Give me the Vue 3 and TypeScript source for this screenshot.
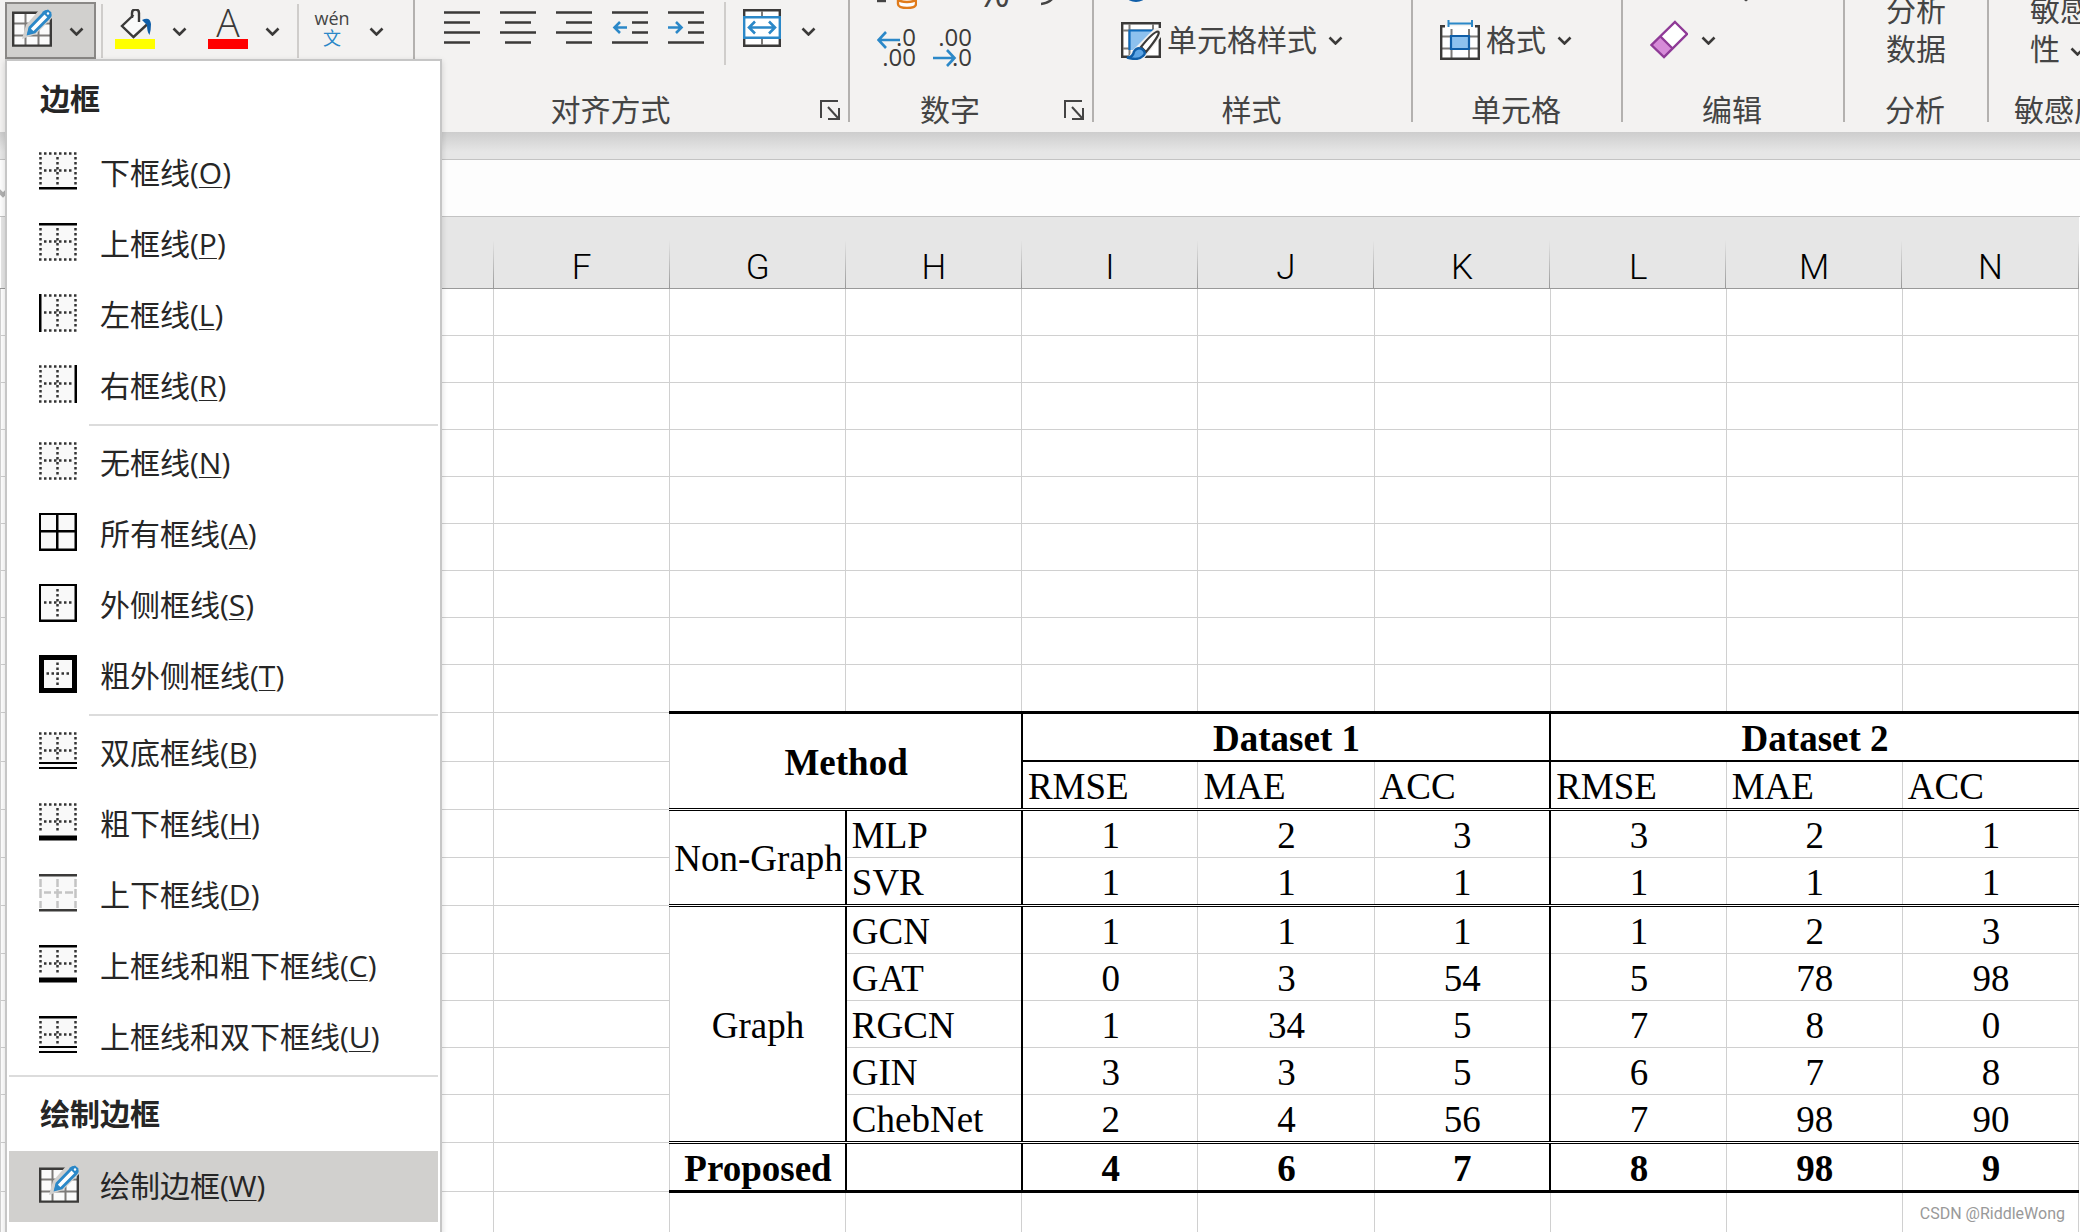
<script setup lang="ts">
interface MenuItem { label: string; key: string; icon: string }
interface Cell { text: string; cls: string; rows?: number; cols?: number }
interface Row { height: number; lead: number; cells: Cell[] }

const menuGroups: MenuItem[][] = [
  [
    { label: '下框线', key: 'O', icon: 'bottom' },
    { label: '上框线', key: 'P', icon: 'top' },
    { label: '左框线', key: 'L', icon: 'left' },
    { label: '右框线', key: 'R', icon: 'right' },
  ],
  [
    { label: '无框线', key: 'N', icon: 'none' },
    { label: '所有框线', key: 'A', icon: 'all' },
    { label: '外侧框线', key: 'S', icon: 'outer' },
    { label: '粗外侧框线', key: 'T', icon: 'thick-outer' },
  ],
  [
    { label: '双底框线', key: 'B', icon: 'double-bottom' },
    { label: '粗下框线', key: 'H', icon: 'thick-bottom' },
    { label: '上下框线', key: 'D', icon: 'top-bottom' },
    { label: '上框线和粗下框线', key: 'C', icon: 'top-thick-bottom' },
    { label: '上框线和双下框线', key: 'U', icon: 'top-double-bottom' },
  ],
]

// Dotted guides and solid strokes that make up each border icon
const dotted: Record<string, string> = {
  bottom: 'M0 1.5H38M1.5 5V34M36.5 5V34M5 18.5H34M18.5 5V34',
  top: 'M0 36.5H38M1.5 5V34M36.5 5V34M5 18.5H34M18.5 5V34',
  left: 'M5 1.5H38M5 36.5H38M36.5 5V34M5 18.5H34M18.5 5V34',
  right: 'M0 1.5H34M0 36.5H34M1.5 5V34M5 18.5H34M18.5 5V34',
  none: 'M0 1.5H38M0 36.5H38M1.5 5V34M36.5 5V34M5 18.5H34M18.5 5V34',
  all: '',
  outer: 'M5 18.5H34M18.5 5V34',
  'thick-outer': 'M7.5 18.5H32M18.5 7.5V32',
  'double-bottom': 'M0 1.5H38M1.5 5V28M36.5 5V28M5 18.5H34M18.5 5V28',
  'thick-bottom': 'M0 1.5H38M1.5 5V28M36.5 5V28M5 18.5H34M18.5 5V28',
  'top-bottom': '',
  'top-thick-bottom': 'M1.5 5V28M36.5 5V28M5 18.5H34M18.5 5V28',
  'top-double-bottom': 'M1.5 5V28M36.5 5V28M5 18.5H34M18.5 5V28',
}
const solid: Record<string, string> = {
  bottom: 'M0 35h38v2.5H0z',
  top: 'M0 0h38v2.5H0z',
  left: 'M0 0h2.5v38H0z',
  right: 'M35.5 0h2.5v38h-2.5z',
  none: '',
  all: 'M0 0h38v38H0zM2 2v15h15V2zM19.5 2v15h16V2zM2 19.5v16h15v-16zM19.5 19.5v16h16v-16z',
  outer: 'M0 0h38v38H0zM2 2v33.5h33.5V2z',
  'thick-outer': 'M0 0h38v38H0zM5 5v28h28V5z',
  'double-bottom': 'M0 30h38v2H0zM0 35h38v2H0z',
  'thick-bottom': 'M0 32.5h38v5H0z',
  'top-bottom': 'M0 0h38v2.5H0zM0 35h38v2.5H0z',
  'top-thick-bottom': 'M0 0h38v2.5H0zM0 32.5h38v5H0z',
  'top-double-bottom': 'M0 0h38v2.5H0zM0 30h38v2H0zM0 35h38v2H0z',
}

const columns = ['', '', '', 'F', 'G', 'H', 'I', 'J', 'K', 'L', 'M', 'N']

const blank = (n: number): Cell[] => Array.from({ length: n }, () => ({ text: '', cls: '' }))
const numbers = (values: number[], extra = ''): Cell[] =>
  values.map((v, i) => ({ text: String(v), cls: `num ${extra}${i % 3 === 0 ? ' vline' : ''}` }))
const method = (height: number, name: string, values: number[], group?: Cell, extra = ''): Row => ({
  height,
  lead: 4,
  cells: [...(group ? [group] : []), { text: name, cls: `name vline ${extra}` }, ...numbers(values, extra)],
})

const rows: Row[] = [
  ...Array.from({ length: 8 }, () => ({ height: 47, lead: 4, cells: blank(8) })),
  { height: 48, lead: 4, cells: blank(8) },
  {
    height: 49,
    lead: 4,
    cells: [
      { text: 'Method', cls: 'num strong heavy', rows: 2, cols: 2 },
      { text: 'Dataset 1', cls: 'num strong heavy vline', cols: 3 },
      { text: 'Dataset 2', cls: 'num strong heavy vline', cols: 3 },
    ],
  },
  {
    height: 48,
    lead: 4,
    cells: ['RMSE', 'MAE', 'ACC', 'RMSE', 'MAE', 'ACC'].map((t, i) => ({
      text: t,
      cls: `name rule${i % 3 === 0 ? ' vline' : ''}`,
    })),
  },
  method(48, 'MLP', [1, 2, 3, 3, 2, 1], { text: 'Non-Graph', cls: 'num tight double', rows: 2 }, 'double'),
  method(48, 'SVR', [1, 1, 1, 1, 1, 1]),
  method(48, 'GCN', [1, 1, 1, 1, 2, 3], { text: 'Graph', cls: 'num double', rows: 5 }, 'double'),
  method(47, 'GAT', [0, 3, 54, 5, 78, 98]),
  method(47, 'RGCN', [1, 34, 5, 7, 8, 0]),
  method(47, 'GIN', [3, 3, 5, 6, 7, 8]),
  method(48, 'ChebNet', [2, 4, 56, 7, 98, 90]),
  method(49, '', [4, 6, 7, 8, 98, 9], { text: 'Proposed', cls: 'num strong double' }, 'double strong'),
  { height: 47, lead: 4, cells: blank(8).map((c) => ({ ...c, cls: 'heavy' })) },
]
</script>

<template>
  <div class="app">
    <svg class="defs" aria-hidden="true">
      <symbol id="chev" viewBox="0 0 15 9"><path d="M1.5 1.5l6 6 6-6" fill="none" stroke="#3b3a39" stroke-width="2.6" /></symbol>
      <symbol id="launch" viewBox="0 0 20 20">
        <path d="M18 1H1v17M8 7l10 11M19 8v11H8" fill="none" stroke="#444" stroke-width="2" />
      </symbol>
      <symbol id="pen-grid" viewBox="0 0 40 38">
        <path d="M1.2 3.8h37.6v32.8H1.2z" fill="#fbfbfb" />
        <path d="M13.5 4v32M26.5 4v32M2 14.5h36M2 26.5h36" stroke="#7d7b79" stroke-width="2" />
        <path d="M1.2 3.8h37.6v32.8H1.2z" fill="none" stroke="#3b3a39" stroke-width="2.4" />
        <path d="M10 30l4-14L28 0h12v9L24 25z" fill="#d1d0ce" />
        <path d="M16.5 24.5l1.5-6L32 4q2.500-3 5-.5t0 5L22.5 23z" fill="#fff" stroke="#2b88c8" stroke-width="2.8" />
        <path d="M15 26l2-8 6 5.5zM30 3l6-2.500 3.500 3L37 10z" fill="#2b88c8" />
        <circle cx="36" cy="4.5" r="1.2" fill="#fff" />
      </symbol>
    </svg>

    <header class="ribbon">
      <section class="group font-group">
        <div class="tools">
          <button class="tool active" aria-label="边框">
            <svg class="i40" height="38"><use href="#pen-grid" /></svg><svg class="chev"><use href="#chev" /></svg>
          </button>
          <i class="sep" />
          <button class="tool" aria-label="填充颜色">
            <svg class="i40" viewBox="0 0 40 40" height="40">
              <path d="M7 17L19 5l14 10-15 13z" fill="#fafafa" />
              <path d="M18.500 6L7 17l11.500 11L32 15.500M17 9V4q0-3.500 3.500-3.500T24 4v9" fill="none" stroke="#3b3a39" stroke-width="2.4" />
              <path d="M27 11q8-4 9 4 0 6-1.500 11-2.500-3-2.500-10z" fill="#0f5ea8" />
              <path d="M0 30h40v10H0z" fill="#ff0" />
            </svg><svg class="chev"><use href="#chev" /></svg>
          </button>
          <button class="tool color" aria-label="字体颜色">
            <svg class="i40" viewBox="0 0 40 40" height="40">
              <text x="20" y="28" text-anchor="middle" class="letter">A</text>
              <path d="M0 30h40v10H0z" fill="red" />
            </svg><svg class="chev"><use href="#chev" /></svg>
          </button>
          <i class="sep far" />
          <button class="tool" aria-label="拼音指南">
            <span class="pinyin"><span>wén</span><span class="wen">文</span></span><svg class="chev"><use href="#chev" /></svg>
          </button>
        </div>
      </section>
      <i class="divider" />

      <section class="group align-group">
        <div class="tools">
          <button class="tool" aria-label="左对齐"><svg class="i36" viewBox="0 0 36 36"><path d="M0 3.500h36M0 13.500h26M0 23.500h36M0 33.500h26" /></svg></button>
          <button class="tool" aria-label="居中"><svg class="i36" viewBox="0 0 36 36"><path d="M0 3.500h36M5 13.500h26M0 23.500h36M5 33.500h26" /></svg></button>
          <button class="tool" aria-label="右对齐"><svg class="i36" viewBox="0 0 36 36"><path d="M0 3.500h36M10 13.500h26M0 23.500h36M10 33.500h26" /></svg></button>
          <button class="tool" aria-label="减少缩进量"><svg class="i36" viewBox="0 0 36 36"><path d="M0 3.500h36M20 13.500h16M20 23.500h16M0 33.500h36" /><path class="blue" d="M15 18.500H2M8 13l-5.500 5.500L8 24" /></svg></button>
          <button class="tool" aria-label="增加缩进量"><svg class="i36" viewBox="0 0 36 36"><path d="M0 3.500h36M20 13.500h16M20 23.500h16M0 33.500h36" /><path class="blue" d="M0 18.500h13M8 13l5.500 5.500L8 24" /></svg></button>
          <i class="sep tall" />
          <button class="tool" aria-label="合并后居中">
            <svg class="i38" viewBox="0 0 38 38">
              <path d="M1.200 1.200h35.600v35.600H1.200z" fill="#fff" stroke="#3b3a39" stroke-width="2.4" />
              <path d="M19 2v6M19 30v6" stroke="#7d7b79" stroke-width="2" />
              <path d="M1.200 8.200h35.600v20.600H1.200z" fill="#fff" stroke="#2b88c8" stroke-width="2.4" />
              <path class="blue" d="M6 18.500h26M12 12.500l-6 6 6 6M26 12.500l6 6-6 6" />
            </svg><svg class="chev wide"><use href="#chev" /></svg>
          </button>
        </div>
        <footer class="label"><span>对齐方式</span><button class="launcher" aria-label="对齐设置"><svg width="20" height="20"><use href="#launch" /></svg></button></footer>
      </section>
      <i class="divider" />

      <section class="group number-group">
        <div class="clipped">
          <svg width="40" height="9" viewBox="0 0 40 9"><path d="M0 1h9" stroke="#444" stroke-width="2.4" /><path d="M21 -2v6q0 4 9 4t9-4v-6M21 -1q2 3 9 3t9-3" fill="#fff" stroke="#e07b1a" stroke-width="2.4" /></svg>
          <svg class="percent" width="36" height="9" viewBox="0 0 36 9"><text x="0" y="7">%</text></svg>
          <svg width="12" height="9" viewBox="0 0 12 9"><path d="M12 -2Q8 3 0 4" fill="none" stroke="#444" stroke-width="2.4" /></svg>
        </div>
        <div class="decimals">
          <button aria-label="增加小数位数"><svg width="40" height="40" viewBox="0 0 40 40"><text x="39" y="18">.0</text><text x="39" y="38">.00</text><path class="blue" d="M23 12H2M9 4L1.500 12 9 20" /></svg></button>
          <button aria-label="减少小数位数"><svg width="40" height="40" viewBox="0 0 40 40"><text x="39" y="18">.00</text><text x="39" y="38">.0</text><path class="blue" d="M0 30h21M14 22l7.500 8-7.500 8" /></svg></button>
        </div>
        <footer class="label"><span>数字</span><button class="launcher" aria-label="数字设置"><svg width="20" height="20"><use href="#launch" /></svg></button></footer>
      </section>
      <i class="divider" />

      <section class="group style-group">
        <svg class="peek" width="40" height="3" viewBox="0 0 40 3"><ellipse cx="16" cy="-3" rx="9" ry="5" fill="#0f5ea8" /></svg>
        <button class="wide-tool">
          <svg width="40" height="40" viewBox="0 0 40 40">
            <path d="M1.200 3.200h37.600v33.600H1.200z" fill="#fff" stroke="#3b3a39" stroke-width="2.4" />
            <path d="M8.500 4v32M32 4v8M2 10.500h36M2 28.500h10" stroke="#7d7b79" stroke-width="2" />
            <path d="M8.500 10.500h26L16 30H8.500z" fill="#8dc1ee" />
            <path d="M8.500 30V10.500H34" fill="none" stroke="#0f6cbd" stroke-width="2.2" />
            <path d="M3 40q4-1 8-9L34 8h6v9L25 36l-3 4z" fill="#f3f2f1" />
            <path d="M20 27Q32 12 37 11.500q4 1-12 20.500z" fill="#fff" stroke="#3b3a39" stroke-width="2.2" />
            <path d="M6 37.500q6 0 7-6 3-5 8-2.500 5 4 1 7-5 5-16 1.500z" fill="#5ea6e6" stroke="#0f5ea8" stroke-width="2.4" />
          </svg>
          <span>单元格样式</span><svg class="chev"><use href="#chev" /></svg>
        </button>
        <footer class="label"><span>样式</span></footer>
      </section>
      <i class="divider" />

      <section class="group cell-group">
        <span class="peek" />
        <button class="wide-tool">
          <svg width="40" height="40" viewBox="0 0 40 40">
            <path d="M1.200 6.200h37.600v32.600H1.200z" fill="#fff" />
            <path d="M11.500 9v30M29 9v30M2 16.500h36M2 28.500h36" stroke="#7d7b79" stroke-width="2" />
            <path d="M5 6.200H1.200v32.600h37.600V6.200H35" fill="none" stroke="#3b3a39" stroke-width="2.4" />
            <path d="M11 16h18v13H11z" fill="#8dc1ee" stroke="#0f5ea8" stroke-width="2.2" />
            <path d="M8.500 0v7M32 0v7M8 3.500h24" stroke="#2b88c8" stroke-width="2" />
          </svg>
          <span>格式</span><svg class="chev"><use href="#chev" /></svg>
        </button>
        <footer class="label"><span>单元格</span></footer>
      </section>
      <i class="divider" />

      <section class="group edit-group">
        <svg class="peek end" width="8" height="3" viewBox="0 0 8 3"><path d="M2 0l2 1.500L6 0z" fill="#444" /></svg>
        <button class="wide-tool eraser" aria-label="清除">
          <svg width="38" height="40" viewBox="0 0 38 40">
            <path d="M25 2l12 12-23 23L2 24.500z" fill="#fff" />
            <path d="M10.500 16.500l12 12-8 8L2 24.500z" fill="#d68bd8" />
            <path d="M25 2l12 12-23 23L1.500 25zM10.500 16.500l12 12" fill="none" stroke="#8f3a97" stroke-width="2.4" />
          </svg><svg class="chev"><use href="#chev" /></svg>
        </button>
        <footer class="label"><span>编辑</span></footer>
      </section>
      <i class="divider" />

      <section class="group analyze-group">
        <button class="big">分析<br />数据</button>
        <footer class="label"><span>分析</span></footer>
      </section>
      <i class="divider" />

      <section class="group sense-group">
        <button class="big">敏感<br />性<svg class="chev"><use href="#chev" /></svg></button>
        <footer class="label"><span>敏感度</span></footer>
      </section>
    </header>

    <div class="band" />
    <div class="formula-bar">
      <svg width="6" height="14" viewBox="0 0 6 14"><path d="M-4 2l7 7 5-5" fill="none" stroke="#b0b0b0" stroke-width="4" /></svg>
    </div>

    <table class="sheet">
      <colgroup><col class="first" /><col v-for="n in 11" :key="n" /></colgroup>
      <thead>
        <tr><th v-for="(c, i) in columns" :key="i" scope="col">{{ c }}</th></tr>
      </thead>
      <tbody>
        <tr v-for="(row, r) in rows" :key="r" :style="{ height: row.height + 'px' }">
          <td v-for="n in row.lead" :key="'lead' + n" />
          <td v-for="(cell, c) in row.cells" :key="c" :class="cell.cls" :rowspan="cell.rows" :colspan="cell.cols">{{ cell.text }}</td>
        </tr>
      </tbody>
    </table>

    <nav class="menu" aria-label="边框">
      <h2>边框</h2>
      <template v-for="(group, g) in menuGroups" :key="g">
        <hr v-if="g > 0" />
        <button v-for="item in group" :key="item.key" class="item">
          <svg width="38" height="38" viewBox="0 0 38 38">
            <path d="M1 1h36v36H1z" fill="#f9f9f9" />
            <path v-if="item.icon === 'top-bottom'" d="M1.500 5v8M1.500 15v9M1.500 27v7M18.500 5v8M18.500 15v9M18.500 27v7M36.500 5v8M36.500 15v9M36.500 27v7M5 18.500h7M15 18.500h8M26 18.500h8" stroke="#c4c4c4" stroke-width="2.5" />
            <path :d="dotted[item.icon]" stroke="#333" stroke-width="2.5" stroke-dasharray="2.5 2.5" />
            <path :d="solid[item.icon]" fill-rule="evenodd" :fill="item.icon === 'top-bottom' ? '#3b3a39' : '#000'" />
          </svg>
          <span>{{ item.label }}(<u>{{ item.key }}</u>)</span>
        </button>
      </template>
      <hr class="full" />
      <h2 class="second">绘制边框</h2>
      <button class="item selected">
        <svg width="40" height="38"><use href="#pen-grid" /></svg>
        <span>绘制边框(<u>W</u>)</span>
      </button>
    </nav>

    <div class="watermark">CSDN @RiddleWong</div>
  </div>
</template>

<style>
body {
  margin: 0;
  overflow: hidden;
}
</style>

<style scoped>
.app {
  position: relative;
  height: 100vh;
  overflow: hidden;
  background: #fff;
  color: #444;
  font: 30px/40px "Open Sans", "Noto Sans CJK SC", sans-serif;
}
.app * {
  box-sizing: border-box;
}
.defs {
  position: absolute;
  width: 0;
  height: 0;
}
svg {
  display: block;
  flex: none;
}
button {
  margin: 0;
  padding: 0;
  border: 0;
  background: none;
  color: inherit;
  font: inherit;
  text-align: left;
}
.ribbon {
  display: flex;
  height: 132px;
  overflow: hidden;
  background: #f3f2f1;
}
.group {
  display: flex;
  flex: none;
  flex-direction: column;
}
.divider {
  flex: none;
  width: 2px;
  height: 122px;
  background: #b3b1af;
}
.label {
  display: flex;
  margin-top: auto;
  height: 44px;
  line-height: 44px;
}
.label span {
  flex: 1;
  padding-right: 2px;
  text-align: center;
  white-space: nowrap;
}
.launcher {
  display: flex;
  align-items: center;
  width: 28px;
  margin-left: 12px;
}
.tools {
  display: flex;
  padding-top: 2px;
}
.tool {
  display: flex;
  align-items: flex-start;
  height: 57px;
  padding: 7px 0;
}
.tool.active {
  padding: 5px 10px 5px 5px;
  border: 2px solid #8a8886;
  background: #d1d0ce;
}
.chev {
  width: 15px;
  height: 9px;
}
.tool .chev {
  margin: 18px 0 0 17px;
}
.tool .chev.wide {
  margin-left: 20px;
}
.i40 {
  width: 40px;
}
.i38 {
  width: 38px;
  height: 38px;
}
.i36 {
  width: 36px;
  height: 36px;
}
.i36 path {
  fill: none;
  stroke: #3b3a39;
  stroke-width: 2.5;
}
path.blue,
.i36 path.blue {
  fill: none;
  stroke: #2b88c8;
  stroke-width: 2.6;
}
.letter {
  fill: #3b3a39;
  font-size: 39px;
  font-weight: 300;
}
.sep {
  width: 2px;
  height: 54px;
  margin: 2px 12px 0 5px;
  background: #cfcdcb;
}
.sep.far {
  margin: 2px 13px 0 17px;
}
.sep.tall {
  height: 63px;
  margin: 0 17px 0 0;
}
.color {
  margin-left: 21px;
}
.font-group {
  width: 413px;
  padding-left: 5px;
}
.pinyin {
  display: flex;
  flex-direction: column;
  align-items: center;
  width: 40px;
  font-size: 18px;
  line-height: 20px;
}
.pinyin span:first-child {
  margin-top: -1px;
}
.wen {
  color: #2b88c8;
}
.align-group {
  width: 433px;
}
.align-group .tools {
  gap: 20px;
  padding-left: 29px;
}
.align-group .sep + .tool {
  margin-left: -20px;
}
.number-group {
  width: 242px;
}
.clipped {
  display: flex;
  height: 28px;
  padding-left: 27px;
}
.clipped .percent {
  margin: 0 28px 0 60px;
}
.percent text {
  fill: #444;
  font-size: 40px;
}
.decimals {
  display: flex;
  gap: 16px;
  padding-left: 27px;
}
.decimals text {
  fill: #3b3a39;
  font-family: "Liberation Sans Narrow", "Open Sans", sans-serif;
  font-size: 24px;
  text-anchor: end;
}
.style-group {
  width: 317px;
}
.cell-group {
  width: 208px;
}
.edit-group {
  width: 220px;
}
.analyze-group {
  width: 142px;
}
.sense-group {
  width: 142px;
}
.peek {
  height: 3px;
  margin: 0 0 17px 26px;
}
.peek.end {
  margin-left: 119px;
}
.wide-tool {
  display: flex;
  align-items: center;
  height: 40px;
  padding-left: 27px;
}
.wide-tool span {
  margin: 0 11px 0 6px;
}
.eraser {
  gap: 13px;
}
.big {
  align-self: center;
  margin-top: -10px;
  line-height: 39px;
  white-space: nowrap;
}
.big .chev {
  display: inline-block;
  margin-left: 10px;
  vertical-align: middle;
}
.band {
  height: 27px;
  background: linear-gradient(#cdcdcd, #e6e6e6 20px);
}
.formula-bar {
  display: flex;
  align-items: center;
  height: 58px;
  padding-top: 10px;
  border: solid #c3c3c3;
  border-width: 1px 0;
  background: #fdfdfd;
}
.sheet {
  width: calc(100% - 1px);
  table-layout: fixed;
  border-collapse: collapse;
  color: #000;
  font: 37px/40px "Liberation Serif", serif;
}
.first {
  width: 141px;
}
thead tr {
  height: 71px;
}
th {
  padding: 31px 0 0;
  border-bottom: 1px solid #999;
  background: linear-gradient(#e6e6e6, #999) right bottom / 1px 48px no-repeat #e6e6e6;
  font: 300 35px/39px Roboto, sans-serif;
}
td {
  padding: 4px 5px 0;
  border: 1px solid #d0d0d0;
  white-space: nowrap;
}
thead + tbody tr:first-child td {
  border-top: 1px solid #999;
}
.num {
  padding: 4px 4px 0 5px;
  text-align: center;
}
.tight {
  padding: 4px 1px 0 3px;
}
.strong {
  font-weight: 700;
}
.vline {
  border-left: 2px solid #000;
}
.heavy {
  border-top: 3px solid #000;
}
.rule {
  border-top: 2px solid #000;
}
.double {
  border-top: 3px double #000;
}
.menu {
  position: absolute;
  top: 59px;
  left: 5px;
  width: 437px;
  height: 1200px;
  border: 2px solid #c6c6c6;
  background: #fff;
  box-shadow: 0 2px 6px rgba(0, 0, 0, 0.15);
  color: #262626;
}
h2 {
  height: 77px;
  margin: 0;
  padding-left: 33px;
  font-size: 30px;
  line-height: 76px;
}
h2.second {
  height: 74px;
  line-height: 74px;
}
hr {
  height: 2px;
  margin: 2px 2px 2px 82px;
  border: 0;
  background: #dcdcdc;
}
hr.full {
  margin: 2px 2px 0;
}
.item {
  display: flex;
  align-items: center;
  width: 429px;
  height: 71px;
  margin: 0 2px;
  padding-left: 30px;
}
.item svg {
  margin-bottom: 5px;
}
.item span {
  margin: 0 0 2px 23px;
}
.item.selected {
  background: #d1d0ce;
}
.item.selected span {
  margin-left: 21px;
}
u {
  text-decoration-thickness: 1px;
  text-underline-offset: 3px;
}
.watermark {
  position: absolute;
  right: 15px;
  bottom: 6px;
  color: #999;
  font: 16px/24px Roboto, sans-serif;
}
</style>
